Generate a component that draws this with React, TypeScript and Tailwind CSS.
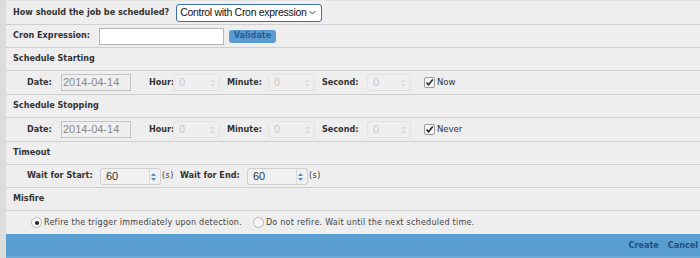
import React from "react";

const bold = "shrink-0 whitespace-nowrap font-bold text-[9px] text-[#333] [font-family:'DejaVu_Sans_Condensed','DejaVu_Sans',sans-serif] [font-stretch:condensed]";

function Spin({ value, disabled, w }: { value: string; disabled?: boolean; w: string }) {
  return (
    <div
      className={`relative flex h-[17px] shrink-0 items-center rounded-[3px] border ${w} ${
        disabled ? "border-[#e2e2e2] bg-[#efefef] text-[#c8c8c8]" : "border-[#d0d0d0] bg-[#f1f1f1] text-[#333]"
      } pl-[5px] text-[11px] [font-family:'Liberation_Sans',Arial,sans-serif]`}
    >
      <span>{value}</span>
      <svg
        className="absolute right-[3px] top-[2px]"
        width="7"
        height="12"
        viewBox="0 0 7 12"
      >
        <path d="M1 5 L3.5 2 L6 5 Z" fill={disabled ? "#dcdcdc" : "#4a8ed0"} />
        <path d="M1 7 L3.5 10 L6 7 Z" fill={disabled ? "#dcdcdc" : "#4a8ed0"} />
      </svg>
      {!disabled && <div className="absolute right-[10px] top-0 h-full w-px bg-[#d8d8d8]" />}
    </div>
  );
}

function Check({ label }: { label: string }) {
  return (
    <div className="flex items-center gap-[2px]">
      <div className="flex h-[11px] w-[11px] items-center justify-center rounded-[2px] border border-[#9a9a9a] bg-[#f6f6f6]">
        <svg width="9" height="9" viewBox="0 0 9 9">
          <path d="M1.5 4.5 L3.5 6.8 L7.8 1.5" stroke="#222" strokeWidth="1.5" fill="none" />
        </svg>
      </div>
      <span className="text-[8.5px] text-[#333] [font-family:'DejaVu_Sans','Verdana',sans-serif]">{label}</span>
    </div>
  );
}

function DateRow({ check }: { check: string }) {
  return (
    <div className="flex h-[24px] items-center border-b border-[#cfcfcf] pl-[21px]">
      <span className={`${bold} w-[34px]`}>Date:</span>
      <div className="flex h-[17px] w-[70px] shrink-0 items-center border border-[#c4c4c4] bg-[#efefef] pl-[1px] text-[11px] text-[#8a8a8a] [font-family:'Liberation_Sans',Arial,sans-serif]">
        2014-04-14
      </div>
      <span className={`${bold} ml-[18px] w-[24px]`}>Hour:</span>
      <Spin value="0" disabled w="w-[47px]" />
      <span className={`${bold} ml-[7px] w-[41px]`}>Minute:</span>
      <Spin value="0" disabled w="w-[47px]" />
      <span className={`${bold} ml-[7px] w-[45px]`}>Second:</span>
      <Spin value="0" disabled w="w-[44px]" />
      <div className="ml-[13px]">
        <Check label={check} />
      </div>
    </div>
  );
}

function Header({ title }: { title: string }) {
  return (
    <div className="flex h-[23px] items-center border-b border-[#cfcfcf] pl-[7px]">
      <span className={bold}>{title}</span>
    </div>
  );
}

function Radio({ checked, label }: { checked?: boolean; label: string }) {
  return (
    <div className="flex items-center gap-[2px]">
      <div className="flex h-[11px] w-[11px] items-center justify-center rounded-full border border-[#b5b5b5] bg-[#f8f8f8]">
        {checked && <div className="h-[4px] w-[4px] rounded-full bg-[#222]" />}
      </div>
      <span className="whitespace-nowrap text-[8px] tracking-[0.25px] text-[#444] [font-family:'DejaVu_Sans','Verdana',sans-serif]">{label}</span>
    </div>
  );
}

export default function App() {
  return (
    <div className="flex h-[258px] w-[700px] bg-[#dcdcdc]">
      <div className="ml-[6px] flex flex-1 flex-col bg-[#eeeeee]">
        <div className="flex h-[25px] items-center border-b border-t border-[#cfcfcf] border-t-[#e4e4e4] pl-[7px]">
          <span className={bold}>How should the job be scheduled?</span>
          <div className="ml-[7px] flex h-[18px] w-[146px] shrink-0 items-center justify-between rounded-[3px] border border-[#3d6fa8] bg-white pl-[3px] pr-[5px] text-[10.5px] text-[#111] [font-family:'Liberation_Sans',Arial,sans-serif]">
            <span className="whitespace-nowrap tracking-[-0.3px]">Control with Cron expression</span>
            <svg width="7" height="5" viewBox="0 0 7 5">
              <path d="M0.5 1 L3.5 4 L6.5 1" stroke="#333" strokeWidth="0.9" fill="none" />
            </svg>
          </div>
        </div>
        <div className="flex h-[23px] items-center border-b border-[#cfcfcf] pl-[7px]">
          <span className={`${bold} w-[86px]`}>Cron Expression:</span>
          <div className="h-[17px] w-[125px] shrink-0 border border-[#b5b5b5] bg-white" />
          <div className={`ml-[5px] flex h-[13px] w-[47px] items-center justify-center rounded-[3px] bg-[#5a9bd3] font-bold text-[9px] text-[#2c5d8c] [font-family:'DejaVu_Sans_Condensed','DejaVu_Sans',sans-serif] [font-stretch:condensed]`}>
            Validate
          </div>
        </div>
        <Header title="Schedule Starting" />
        <DateRow check="Now" />
        <Header title="Schedule Stopping" />
        <DateRow check="Never" />
        <Header title="Timeout" />
        <div className="flex h-[23px] items-center border-b border-[#cfcfcf] pl-[21px]">
          <span className={`${bold} w-[73px]`}>Wait for Start:</span>
          <Spin value="60" w="w-[61px]" />
          <span className="ml-[1px] text-[8px] tracking-[0.5px] text-[#333] [font-family:'DejaVu_Sans',sans-serif]">(s)</span>
          <span className={`${bold} ml-[6px] w-[67px]`}>Wait for End:</span>
          <Spin value="60" w="w-[61px]" />
          <span className="ml-[1px] text-[8px] tracking-[0.5px] text-[#333] [font-family:'DejaVu_Sans',sans-serif]">(s)</span>
        </div>
        <Header title="Misfire" />
        <div className="flex h-[23px] items-center gap-[11px] pl-[25px]">
          <Radio checked label="Refire the trigger immediately upon detection." />
          <Radio label="Do not refire. Wait until the next scheduled time." />
        </div>
        <div className="flex flex-1 items-center justify-end gap-[9px] border-b-2 border-[#6aa8d8] bg-[#5a9dd0] pr-[2px] pt-[1px]">
          <span className="font-bold text-[9px] text-[#1f4f7d] [font-family:'DejaVu_Sans_Condensed','DejaVu_Sans',sans-serif] [font-stretch:condensed]">Create</span>
          <span className="font-bold text-[9px] text-[#1f4f7d] [font-family:'DejaVu_Sans_Condensed','DejaVu_Sans',sans-serif] [font-stretch:condensed]">Cancel</span>
        </div>
      </div>
    </div>
  );
}
